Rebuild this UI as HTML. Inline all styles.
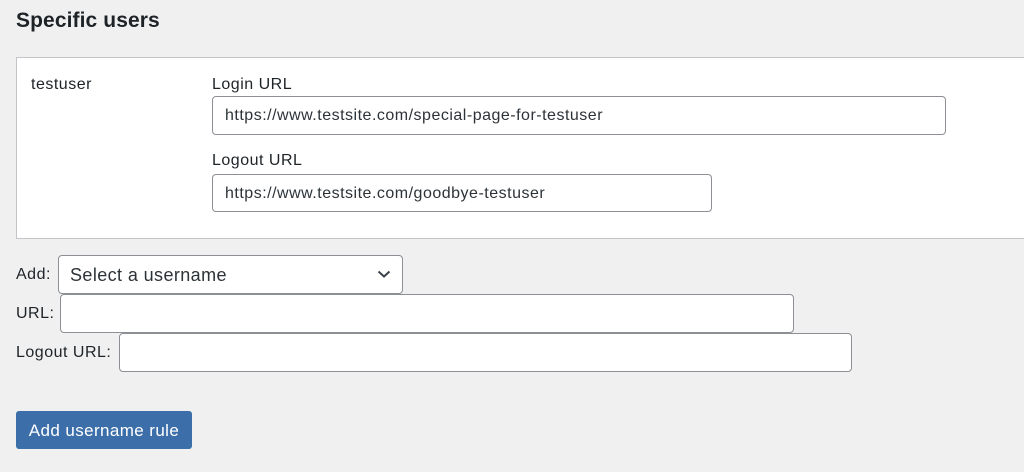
<!DOCTYPE html>
<html><head><meta charset="utf-8"><style>
body{margin:0;width:1024px;height:472px;background:#f0f0f1;font-family:"Liberation Sans",sans-serif;color:#1d2327;position:relative;overflow:hidden}
.a{position:absolute}
h2{position:absolute;left:16px;top:9px;margin:0;font-size:21px;font-weight:bold;color:#1d2327;letter-spacing:0.1px}
.box{left:16px;top:57px;width:1020px;height:180px;background:#fff;border:1px solid #c3c4c7}
.t{font-size:16px;line-height:18px;letter-spacing:0.5px}
.in{position:absolute;background:#fff;border:1px solid #8c8f94;border-radius:4px;box-sizing:border-box;font-size:16px;letter-spacing:0.5px;line-height:38px;padding-left:12px;color:#2c3338}
.btn{left:16px;top:411px;width:176px;height:38px;background:#3c6ea9;border-radius:3px;color:#fff;font-size:17px;letter-spacing:0.4px;line-height:40px;text-align:center}
</style></head><body>
<h2>Specific users</h2>
<div class="a box"></div>
<div class="a t" style="left:31px;top:76px">testuser</div>
<div class="a t" style="left:212px;top:76px">Login URL</div>
<div class="in" style="left:212px;top:96px;width:734px;height:39px">https://www.testsite.com/special-page-for-testuser</div>
<div class="a t" style="left:212px;top:152px">Logout URL</div>
<div class="in" style="left:212px;top:174px;width:500px;height:38px">https://www.testsite.com/goodbye-testuser</div>
<div class="a t" style="left:16px;top:266px">Add:</div>
<div class="in" style="left:58px;top:255px;width:345px;height:39px;font-size:18px;letter-spacing:0.4px;padding-left:11px">Select a username
<svg class="a" style="left:318px;top:13px" width="14" height="10" viewBox="0 0 14 10"><path d="M1.5 2.5 L7 7.5 L12.5 2.5" fill="none" stroke="#3c434a" stroke-width="2"/></svg></div>
<div class="a t" style="left:16px;top:305px">URL:</div>
<div class="in" style="left:60px;top:294px;width:734px;height:39px"></div>
<div class="a t" style="left:16px;top:344px">Logout URL:</div>
<div class="in" style="left:119px;top:333px;width:733px;height:39px"></div>
<div class="a btn">Add username rule</div>
</body></html>
